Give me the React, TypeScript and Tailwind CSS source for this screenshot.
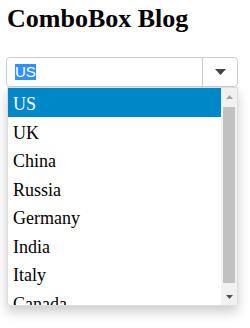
import { useState } from 'react';

const countries = ['US', 'UK', 'China', 'Russia', 'Germany', 'India', 'Italy', 'Canada'];

export default function App() {
  const [selected] = useState('US');

  return (
    <div className="px-[6px] bg-white min-h-[328px]" style={{ fontFamily: '"Liberation Serif", "Times New Roman", serif' }}>
      <h1 className="ml-px pt-[4px] text-[26px] font-bold leading-[30px] text-black">ComboBox Blog</h1>

      {/* combo input */}
      <div className="mt-[23px] w-[232px] h-[30px] flex border border-[#cccccc] rounded-[4px] bg-white">
        <div className="flex-1 flex items-center pl-[8px]">
          <span
            className="bg-[#338fff] text-white text-[15px] leading-[16px]"
            style={{ fontFamily: '"Liberation Sans", Arial, sans-serif' }}
          >
            {selected}
          </span>
        </div>
        <div className="w-[35px] border-l border-[#cccccc] flex items-center justify-center">
          <svg width="11" height="6" viewBox="0 0 11 6">
            <path d="M0 0 H11 L5.5 6 Z" fill="#444444" />
          </svg>
        </div>
      </div>

      {/* dropdown list */}
      <div className="ml-px w-[231px] h-[219px] flex border border-[#dddddd] rounded-b-[3px] bg-white overflow-hidden shadow-[0_6px_12px_rgba(0,0,0,0.2)]">
        <ul className="flex-1 overflow-hidden">
          {countries.map((c) => (
            <li
              key={c}
              className={
                c === selected
                  ? 'h-[28.5px] pl-[5px] pt-[6px] leading-[20px] text-[18px] bg-[#0087c7] text-white'
                  : 'h-[28.5px] pl-[5px] pt-[6px] leading-[20px] text-[18px] text-black'
              }
            >
              {c}
            </li>
          ))}
        </ul>
        <div className="w-[16px] bg-[#f1f1f1] flex flex-col">
          <div className="h-[17px] flex items-center justify-center">
            <svg width="7" height="4" viewBox="0 0 7 4">
              <path d="M0 4 H7 L3.5 0 Z" fill="#a3a3a3" />
            </svg>
          </div>
          <div className="flex-1 px-[2px]">
            <div className="mt-[2px] h-[176px] bg-[#c1c1c1]" />
          </div>
          <div className="h-[17px] flex items-center justify-center">
            <svg width="7" height="4" viewBox="0 0 7 4">
              <path d="M0 0 H7 L3.5 4 Z" fill="#505050" />
            </svg>
          </div>
        </div>
      </div>
    </div>
  );
}
